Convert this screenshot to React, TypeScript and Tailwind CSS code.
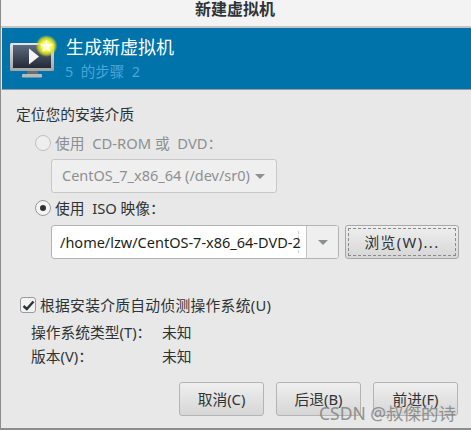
const cjk = "font-['Noto_Sans','Noto_Sans_CJK_SC',sans-serif]";

function Arrow({ color }: { color: string }) {
  return (
    <svg width="10" height="5" viewBox="0 0 10 5">
      <path d="M0 0H10L5 5Z" fill={color} />
    </svg>
  );
}

function VmIcon() {
  return (
    <svg width="50" height="44" viewBox="0 0 50 44" className="shrink-0">
      <defs>
        <linearGradient id="scr" x1="0" y1="0" x2="0" y2="1">
          <stop offset="0" stopColor="#5d6b80" />
          <stop offset="1" stopColor="#232a36" />
        </linearGradient>
        <linearGradient id="frame" x1="0" y1="0" x2="0" y2="1">
          <stop offset="0" stopColor="#e6e6e6" />
          <stop offset="1" stopColor="#a4a4a4" />
        </linearGradient>
        <radialGradient id="glow">
          <stop offset="0.45" stopColor="#fbfb40" />
          <stop offset="0.75" stopColor="#d8dc20" stopOpacity="0.8" />
          <stop offset="1" stopColor="#d8dc20" stopOpacity="0" />
        </radialGradient>
      </defs>
      <rect x="0" y="9" width="44" height="28" rx="1.5" fill="url(#frame)" />
      <rect x="3" y="11" width="38" height="23" fill="url(#scr)" />
      <path d="M19 14.5L29 22.5L19 30.5Z" fill="#f4f4f4" />
      <rect x="17" y="37" width="11" height="3" fill="#6d6d6d" />
      <rect x="12" y="40" width="20" height="3.5" rx="1" fill="#b9b9b9" />
      <circle cx="36.5" cy="12" r="11" fill="url(#glow)" />
      <path
        d="M36.5 5.5L38.5 9.8L43 10.3L39.6 13.3L40.6 18L36.5 15.6L32.4 18L33.4 13.3L30 10.3L34.5 9.8Z"
        fill="#fffde8"
      />
    </svg>
  );
}

function ActionButton({ label }: { label: string }) {
  return (
    <button className="w-[85px] h-[34px] rounded-[3px] border border-[#b4b4b4] bg-gradient-to-b from-[#efefef] to-[#d6d6d6] text-[14.75px] text-[#2e3436]">
      {label}
    </button>
  );
}

export default function App() {
  return (
    <div className={`w-[471px] h-[430px] overflow-hidden relative flex flex-col bg-[#e8e8e8] border-l border-[#8c8c8c] ${cjk}`}>
      <div className="h-[28px] bg-[#f3f3f3] border-b-2 border-[#c4c4c4] flex items-start justify-center pr-[2px] text-[16px] leading-[19px] font-bold text-[#2e3436] shrink-0">
        新建虚拟机
      </div>

      <div className="h-[62px] bg-[#0073aa] border-b border-[#9a9a9a] border-l border-l-[#e8e8e8] flex items-start pl-[8px] pt-[6px] shrink-0">
        <VmIcon />
        <div className="ml-[6px] mt-[1px] flex flex-col">
          <div className="text-[18px] leading-[24px] text-white">生成新虚拟机</div>
          <div className="text-[14.5px] leading-[20px] mt-[2px] -ml-px text-[#4aa5d8] whitespace-pre">5  的步骤  2</div>
        </div>
      </div>

      <div className="flex-1 flex flex-col pl-[15px] pr-[12px] text-[14.75px] text-[#2e3436]">
        <div className="mt-[14px] leading-[20px]">定位您的安装介质</div>

        <div className="mt-[9px] ml-[19px] flex items-center h-[20px] text-[#8d9091]">
          <span className="w-[16px] h-[16px] rounded-full border border-[#c0c0c0] bg-[#eeeeee]" />
          <span className="ml-[4px] whitespace-pre">使用  CD-ROM 或  DVD：</span>
        </div>

        <div className="mt-[6px] ml-[35px] w-[226px] h-[34px] rounded-[3px] border border-[#c8c8c8] bg-[#efefef] flex items-center justify-between pl-[10px] pr-[11px] text-[14.5px] text-[#8d9091]">
          <span>CentOS_7_x86_64 (/dev/sr0)</span>
          <Arrow color="#8d9091" />
        </div>

        <div className="mt-[5px] ml-[19px] flex items-center h-[20px]">
          <span className="w-[16px] h-[16px] rounded-full border border-[#9a9a9a] bg-[#f4f4f4] flex items-center justify-center">
            <span className="w-[6px] h-[6px] rounded-full bg-[#2e3436]" />
          </span>
          <span className="ml-[4px] whitespace-pre">使用  ISO 映像：</span>
        </div>

        <div className="mt-[7px] ml-[35px] flex items-center">
          <div className="w-[288px] h-[34px] rounded-[3px] border border-[#b4b4b4] bg-white flex overflow-hidden">
            <div className="w-[254px] shrink-0 pl-[8px] py-[5px]">
              <div className="w-[239px] whitespace-nowrap leading-[22px] text-[14.5px] text-[#1c1f20] border-r border-dashed border-[#d0d0d0]">
                /home/lzw/CentOS-7-x86_64-DVD-2
              </div>
            </div>
            <div className="flex-1 border-l border-[#c4c4c4] bg-[#efefef] flex items-center justify-center">
              <Arrow color="#8d9091" />
            </div>
          </div>
          <button className="ml-[6px] w-[114px] h-[34px] rounded-[3px] border border-[#a8a8a8] bg-gradient-to-b from-[#efefef] to-[#d6d6d6] p-[2px]">
            <span className="flex h-full items-center justify-center border border-dashed border-[#8a8a8a] text-[14.75px] tracking-[1.4px]">
              浏览(W)...
            </span>
          </button>
        </div>

        <div className="mt-[36px] ml-[4px] flex items-center h-[20px]">
          <span className="w-[16px] h-[16px] rounded-[3px] border border-[#9a9a9a] bg-[#f2f2f2] flex items-center justify-center">
            <svg width="13" height="11" viewBox="0 0 13 11">
              <path d="M1.5 6L4.8 9L11.5 1.5" fill="none" stroke="#2e3436" strokeWidth="2.4" />
            </svg>
          </span>
          <span className="ml-[4px] tracking-[0.3px]">根据安装介质自动侦测操作系统(U)</span>
        </div>

        <div className="mt-[7px] ml-[15px] grid grid-cols-[131px_1fr] gap-y-[4px] leading-[20px]">
          <span>操作系统类型(T)：</span>
          <span>未知</span>
          <span>版本(V)：</span>
          <span>未知</span>
        </div>

        <div className="mt-[16px] flex justify-end gap-[12px] pr-[1px]">
          <ActionButton label="取消(C)" />
          <ActionButton label="后退(B)" />
          <ActionButton label="前进(F)" />
        </div>
      </div>

      <div className="h-[2px] bg-[#8c8c8c] shrink-0" />

      <div className="absolute left-[318px] top-[402px] text-[17.5px] leading-[22px] text-[#7d7d7d] opacity-80 whitespace-nowrap">
        CSDN @叔傑的诗
      </div>
    </div>
  );
}
